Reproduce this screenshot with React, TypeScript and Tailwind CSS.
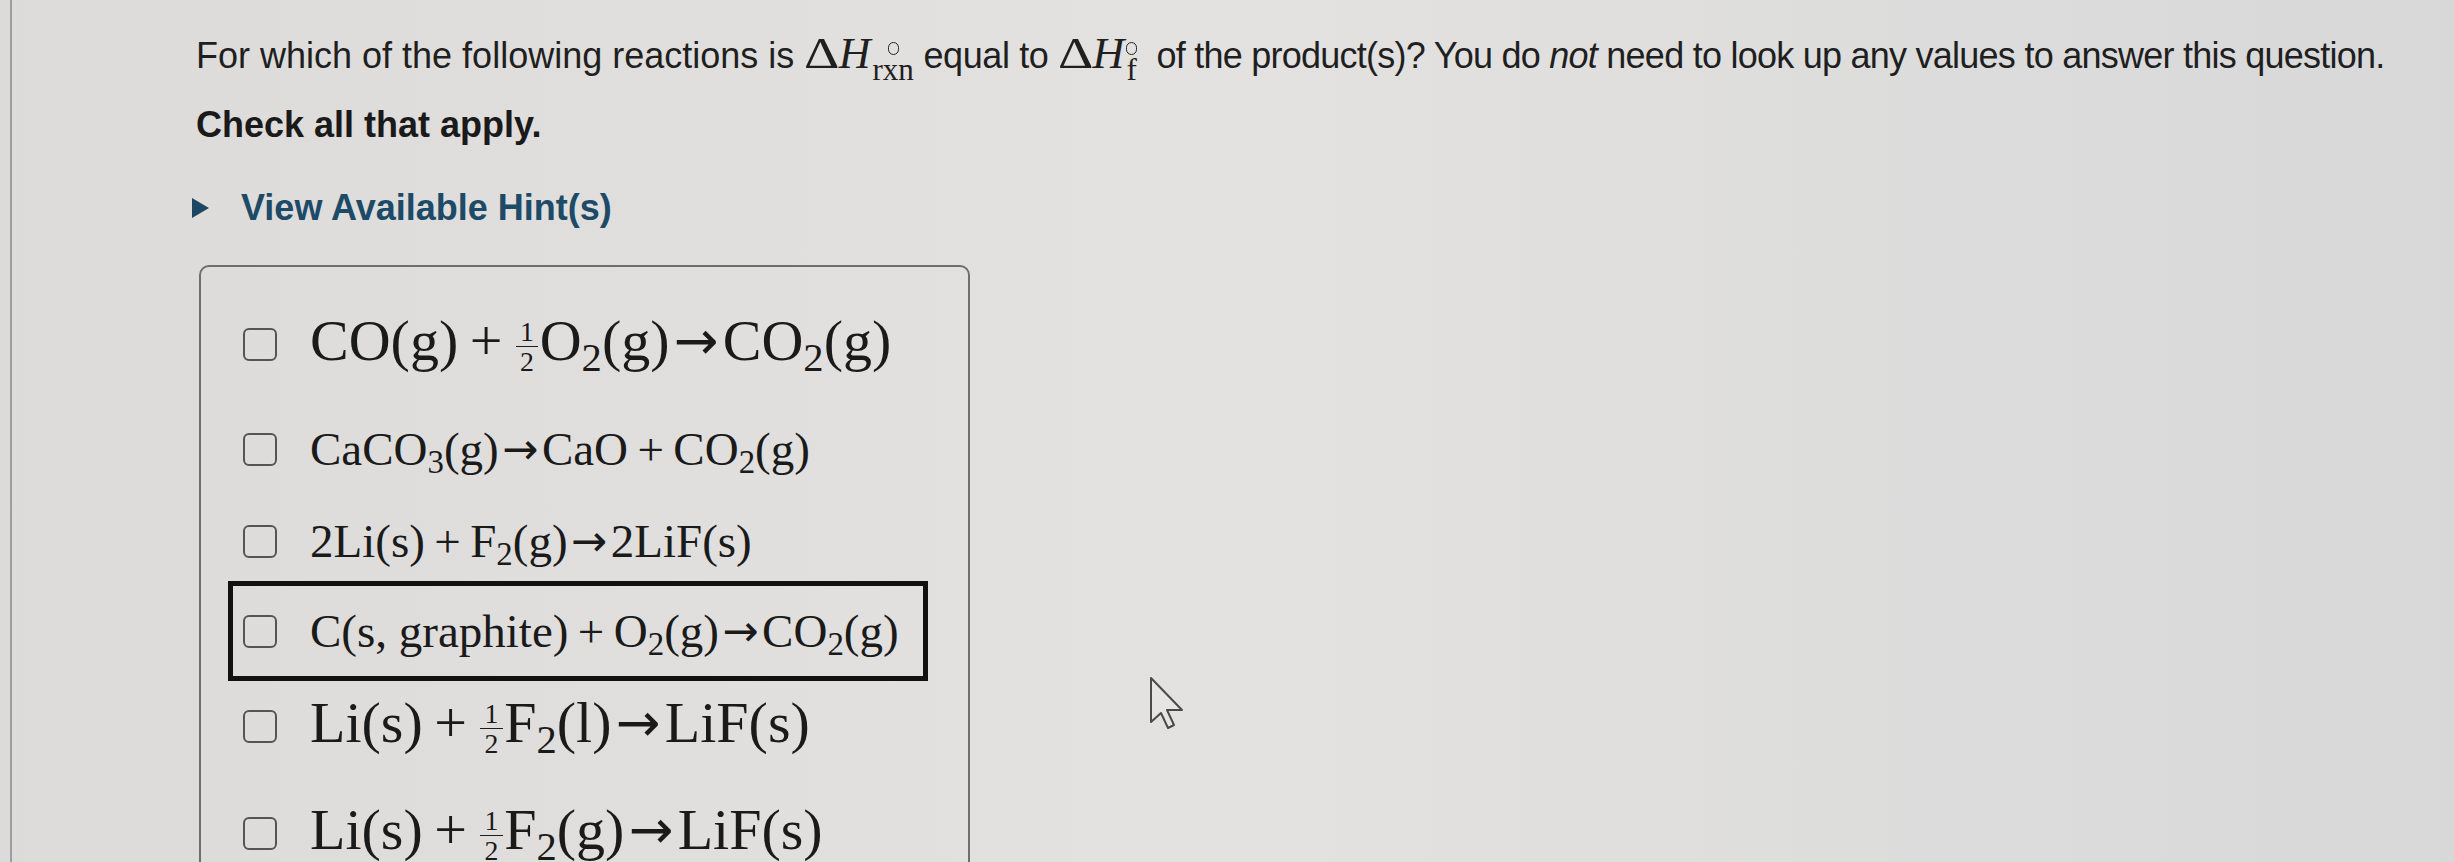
import React from "react";

const Sub = ({ children }: { children: React.ReactNode }) => (
  <span className="relative top-[0.26em] text-[0.7em] leading-none">{children}</span>
);

const Half = () => (
  <span className="inline-flex flex-col items-center align-middle text-[0.48em] leading-none mx-[0.06em]">
    <span className="px-[0.15em] border-b-[1.5px] border-[#1d1d1d]">1</span>
    <span className="pt-[0.04em]">2</span>
  </span>
);

const Plus = () => <span className="mx-[0.2em]">+</span>;
const Arrow = () => (
  <span className="font-['DejaVu_Sans',sans-serif] text-[0.92em] relative top-[-0.02em] mx-[0.08em]">→</span>
);

const Deg = ({ sub, extra }: { sub: string; extra: string }) => (
  <span
    className={`inline-flex flex-col items-center align-middle relative top-[6px] ml-[2px] -my-[10px] leading-none ${extra}`}
  >
    <span className="block w-[11px] h-[13px] rounded-full border-[1.8px] border-[#222]" />
    <span className="text-[31px] font-['Liberation_Serif',serif] not-italic leading-none -mt-[1px]">{sub}</span>
  </span>
);

const DeltaH = ({ sub, extra }: { sub: string; extra: string }) => (
  <span className="font-['Liberation_Serif',serif] text-[44px] leading-[30px] whitespace-nowrap tracking-normal">
    <span className="inline-block scale-x-[1.25] origin-left mr-[0.14em] leading-[30px]">Δ</span>
    <span className="italic">H</span>
    <Deg sub={sub} extra={extra} />
  </span>
);

type RowProps = {
  h: string;
  size: string;
  focused?: boolean;
  children: React.ReactNode;
};

const Row = ({ h, size, focused, children }: RowProps) => (
  <div
    className={`${h} flex items-center pl-[10px] border-[5px] ${
      focused ? "border-[#111]" : "border-transparent"
    }`}
  >
    <span className="w-[34px] h-[33px] shrink-0 rounded-[6px] border-[2.5px] border-[#555]" />
    <span
      className={`ml-[33px] ${size} leading-none whitespace-nowrap text-[#1a1a1a] font-['Liberation_Serif',serif]`}
    >
      {children}
    </span>
  </div>
);

export default function App() {
  return (
    <div className="w-[2454px] h-[862px] overflow-hidden relative flex bg-linear-to-r from-[#dcdbd9] via-[#e3e2e0] to-[#d8d8d9] font-['Liberation_Sans',Arial,sans-serif] text-[#1f1f1f]">
      <div className="w-[10px] shrink-0" />
      <div className="flex-1 border-l-2 border-[#9c9da1] pl-[184px] pt-[38px]">
        <p className="h-[36px] text-[36px] leading-[36px] whitespace-nowrap">
          <span className="tracking-[0px]">For which of the following reactions is </span>
          <DeltaH sub="rxn" extra="mr-[0px]" />
          <span className="tracking-[-0.4px]"> equal to </span>
          <DeltaH sub="f" extra="mr-[10px]" />
          <span className="tracking-[-0.75px]">
            {" "}of the product(s)? You do <i>not</i> need to look up any values to answer this question.
          </span>
        </p>
        <p className="mt-[33px] text-[36px] leading-[36px] font-bold text-[#1a1a1a]">Check all that apply.</p>
        <div className="mt-[47px] flex items-center h-[36px]">
          <svg width="19" height="22" viewBox="0 0 19 22" className="shrink-0 -ml-[5px]">
            <path d="M1 1 L18 11 L1 21 Z" fill="#1b4762" />
          </svg>
          <span className="ml-[31px] text-[36px] leading-[36px] font-bold text-[#1d4a66]">
            View Available Hint(s)
          </span>
        </div>
        <div className="mt-[39px] ml-[3px] w-[771px] h-[700px] border-2 border-[#6e6e6e] rounded-[10px] pt-[24px] pl-[27px] pr-[40px]">
          <Row h="h-[106px]" size="text-[58px]">
            CO(g)
            <Plus />
            <Half />O<Sub>2</Sub>(g)
            <Arrow />
            CO<Sub>2</Sub>(g)
          </Row>
          <Row h="h-[104px]" size="text-[47px]">
            CaCO<Sub>3</Sub>(g)
            <Arrow />
            CaO
            <Plus />
            CO<Sub>2</Sub>(g)
          </Row>
          <Row h="h-[80px]" size="text-[47px]">
            2Li(s)
            <Plus />
            F<Sub>2</Sub>(g)
            <Arrow />
            2LiF(s)
          </Row>
          <Row h="h-[100px]" size="text-[47px]" focused>
            C(s, graphite)
            <Plus />
            O<Sub>2</Sub>(g)
            <Arrow />
            CO<Sub>2</Sub>(g)
          </Row>
          <Row h="h-[90px]" size="text-[58px]">
            Li(s)
            <Plus />
            <Half />F<Sub>2</Sub>(l)
            <Arrow />
            LiF(s)
          </Row>
          <Row h="h-[124px]" size="text-[58px]">
            Li(s)
            <Plus />
            <Half />F<Sub>2</Sub>(g)
            <Arrow />
            LiF(s)
          </Row>
        </div>
      </div>
      <svg
        width="36"
        height="54"
        viewBox="0 0 36 54"
        className="absolute left-[1149px] top-[676px]"
      >
        <path
          d="M2 2 L2 46 L12 37 L19 52 L25 49 L18 34 L33 34 Z"
          fill="#e6e5e3"
          stroke="#4a4a4a"
          strokeWidth="2"
          strokeLinejoin="round"
        />
      </svg>
    </div>
  );
}
